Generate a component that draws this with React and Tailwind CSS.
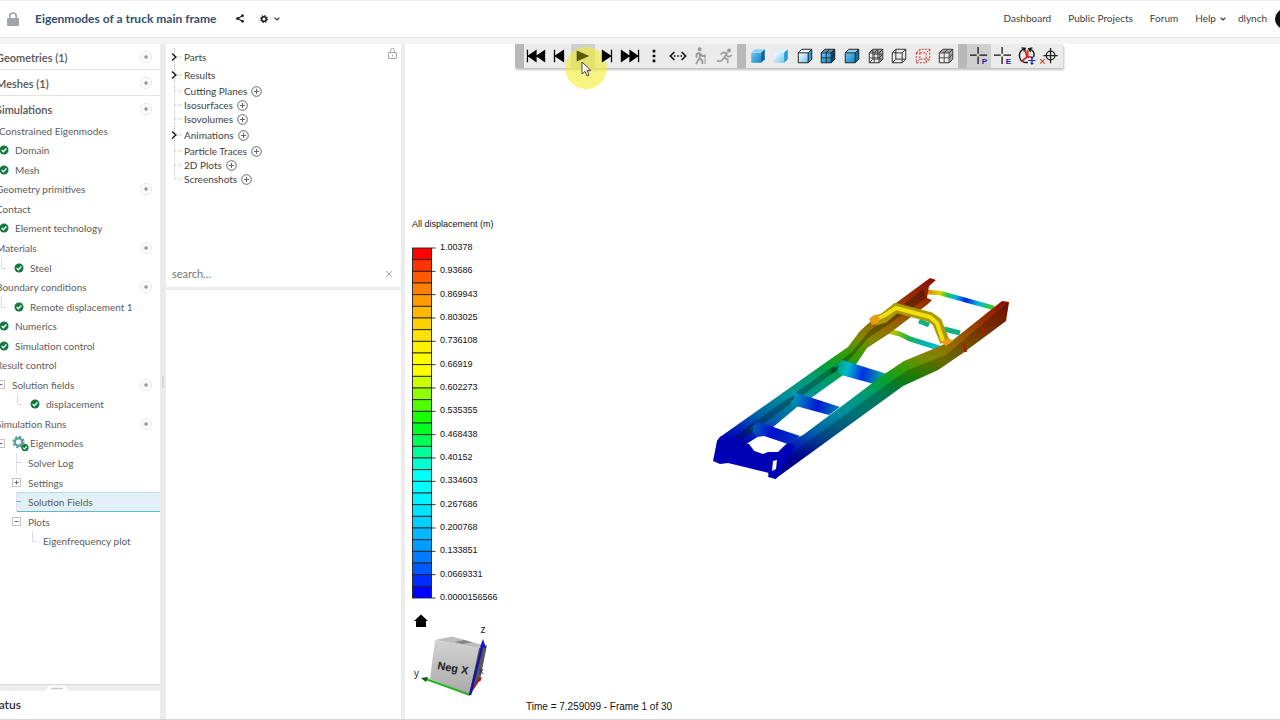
import React from "react";

const PlusDot = ({ label }) => (
  <button aria-label={label} className="flex size-3 shrink-0 items-center justify-center rounded-full border border-[#e6e6e6] bg-white">
    <svg viewBox="0 0 6 6" className="size-1.5" aria-hidden="true">
      <path d="M3 .8v4.4M.8 3h4.4" stroke="#777" strokeWidth="1" />
    </svg>
  </button>
);

const Check = () => (
  <svg viewBox="0 0 10 10" className="size-2.5 shrink-0" aria-hidden="true">
    <circle cx="5" cy="5" r="4.5" fill="#14783f" />
    <path d="M2.7 5.1l1.7 1.7 3-3.2" fill="none" stroke="#fff" strokeWidth="1.4" />
  </svg>
);

const Box = ({ open }) => (
  <svg viewBox="0 0 9 9" className="size-[9px] shrink-0" aria-hidden="true">
    <rect x=".5" y=".5" width="8" height="8" fill="#fff" stroke="#c4c4c4" />
    <path d={open ? "M2.5 4.5h4" : "M2.5 4.5h4M4.5 2.5v4"} stroke="#666" strokeWidth="1" />
  </svg>
);

const Elbow = () => (
  <svg viewBox="0 0 5 20" className="mr-0.5 h-5 w-[5px] shrink-0" aria-hidden="true">
    <path d="M.5 0v10.5H5" fill="none" stroke="#dcdcdc" />
  </svg>
);

const Dash = ({ active }) => (
  <svg viewBox="0 0 5 20" className="h-5 w-[5px] shrink-0" aria-hidden="true">
    <path d="M.5 0v20" stroke="#e2e2e2" />
    <path d="M0 9.5h5" stroke={active ? "#63b5d2" : "#cfcfcf"} />
  </svg>
);

const RunGear = () => (
  <svg viewBox="0 0 17 17" className="size-[17px] shrink-0" aria-hidden="true">
    <circle cx="6.5" cy="7" r="3.7" fill="none" stroke="#5f9e9f" strokeWidth="2.4" />
    <circle cx="6.5" cy="7" r="5.4" fill="none" stroke="#5f9e9f" strokeWidth="1.6" strokeDasharray="2.1 2.14" />
    <circle cx="13" cy="12.6" r="3.6" fill="#14783f" />
    <path d="M11.2 12.6l1.3 1.3 2.3-2.4" fill="none" stroke="#fff" strokeWidth="1.1" />
  </svg>
);

const treeRows = [
  { t: "Constrained Eigenmodes", pad: "pl-[15px]" },
  { t: "Domain", pad: "pl-[15px] gap-1.5", icon: <Check /> },
  { t: "Mesh", pad: "pl-[15px] gap-1.5", icon: <Check /> },
  { t: "Geometry primitives", pad: "pl-[12px]", add: true },
  { t: "Contact", pad: "pl-[12px]" },
  { t: "Element technology", pad: "pl-[15px] gap-1.5", icon: <Check /> },
  { t: "Materials", pad: "pl-[12px]", add: true },
  { t: "Steel", pad: "pl-[17px] gap-1.5", icon: <><Elbow /><Check /></> },
  { t: "Boundary conditions", pad: "pl-[12px]", add: true },
  { t: "Remote displacement 1", pad: "pl-[17px] gap-1.5", icon: <><Elbow /><Check /></> },
  { t: "Numerics", pad: "pl-[15px] gap-1.5", icon: <Check /> },
  { t: "Simulation control", pad: "pl-[15px] gap-1.5", icon: <Check /> },
  { t: "Result control", pad: "pl-[12px]" },
  { t: "Solution fields", pad: "pl-[12px] gap-[7px]", icon: <Box open />, add: true },
  { t: "displacement", pad: "pl-[33px] gap-1.5", icon: <><Elbow /><Check /></> },
  { t: "Simulation Runs", pad: "pl-[12px]", add: true },
  { t: "Eigenmodes", pad: "pl-[12px]", icon: <><Box open /><span className="w-[7px]" /><RunGear /><span className="w-px" /></> },
  { t: "Solver Log", pad: "pl-[32px] gap-[7px]", icon: <Dash /> },
  { t: "Settings", pad: "pl-[28px] gap-[7px]", icon: <Box /> },
  { t: "Solution Fields", pad: "gap-[7px]", icon: <Dash active />, active: true },
  { t: "Plots", pad: "pl-[28px] gap-[7px]", icon: <Box open /> },
  { t: "Eigenfrequency plot", pad: "pl-[48px] gap-1", icon: <Elbow /> },
];

const Section = ({ children, last }) => (
  <div className={"flex items-center pr-2 " + (last ? "h-[25px]" : "h-[26px] border-b border-[#e4e4e4]")}>
    <h2 className="flex-1 pt-0.5 pl-[12px] text-[11px] leading-none font-semibold text-[#555]">{children}</h2>
    <PlusDot label={"Add to " + children} />
  </div>
);

const Sidebar = () => (
  <aside className="flex w-40 shrink-0 flex-col overflow-hidden">
    <nav aria-label="Project tree" className="-ml-4 flex-1 bg-white">
      <Section>Geometries (1)</Section>
      <Section>Meshes (1)</Section>
      <Section last>Simulations</Section>
      <ul className="grid h-[430px] auto-rows-fr text-[10px] leading-none text-[#5c5c5c]">
        {treeRows.map((r) => (
          <li
            key={r.t}
            className={
              "flex min-h-0 items-center pr-2 whitespace-nowrap " +
              (r.active ? "ml-8 border-y border-t-[#b9dce8] border-b-[#63b5d2] bg-[#e1eff6] " : "") +
              r.pad
            }
          >
            {r.icon}
            <a href="#" className="flex-1">{r.t}</a>
            {r.add && <PlusDot label={"Add " + r.t} />}
          </li>
        ))}
      </ul>
    </nav>
    <div className="flex h-[7px] justify-center border-t border-[#dcdcdc] bg-[#ececec] pr-[46px]">
      <svg viewBox="0 0 24 6" className="h-1.5 w-6" aria-hidden="true">
        <path d="M0 6L4 1h16l4 5z" fill="#fff" />
        <path d="M6 3.5h12" stroke="#c9c9c9" strokeWidth="1.6" />
      </svg>
    </div>
    <footer className="-ml-4 h-7 bg-white pl-1 text-[12px] leading-7 font-semibold text-[#333]">Status</footer>
  </aside>
);

const results = [
  ["Parts", true, false],
  ["Results", true, false],
  ["Cutting Planes", false, true],
  ["Isosurfaces", false, true],
  ["Isovolumes", false, true],
  ["Animations", true, true],
  ["Particle Traces", false, true],
  ["2D Plots", false, true],
  ["Screenshots", false, true],
];

const ResultPanel = () => (
  <section className="flex w-[235px] shrink-0 flex-col">
    <div className="flex h-[243px] flex-col bg-white">
      <div className="flex flex-1 items-start justify-between pt-1 pr-1 pl-[5px]">
        <ul className="text-[10px] text-[#3f3f3f]">
          {results.map(([t, exp, add], i) => (
            <li key={t} className={"flex items-center " + (exp ? "h-[18px]" : "h-3.5")}>
              <svg viewBox="0 0 12 18" className="h-full w-3" preserveAspectRatio="none" aria-hidden="true">
                <path d={i === 8 ? "M3.5 0v9" : "M3.5 0v18"} stroke="#bbb" strokeDasharray="1 1" />
                <path d="M4 9h8" stroke="#bbb" strokeDasharray="1 1" />
                {exp && <path d="M1 5.500L4.800 9 1 12.500" fill="none" stroke="#222" strokeWidth="1.600" />}
              </svg>
              <span className="pl-px leading-none">{t}</span>
              {add && (
                <button aria-label={"Add " + t} className="ml-1">
                  <svg viewBox="0 0 11 11" className="size-[11px]" fill="none" stroke="#666" aria-hidden="true">
                    <circle cx="5.5" cy="5.5" r="4.8" />
                    <path d="M5.500 2.900v5.200M2.900 5.500h5.200" />
                  </svg>
                </button>
              )}
            </li>
          ))}
        </ul>
        <svg viewBox="0 0 9 11" className="h-[11px] w-[9px]" fill="none" stroke="#a5a5a5" aria-hidden="true">
          <rect x=".5" y="4.500" width="8" height="6" rx=".5" />
          <path d="M2.500 4.500v-2a2 2 0 014 0v2M4.500 6.500v2" />
        </svg>
      </div>
      <div className="flex h-[26px] items-center px-1.5">
        <input aria-label="Search" placeholder="search..." className="min-w-0 flex-1 bg-transparent text-[11px] outline-none placeholder:text-[#777]" />
        <button aria-label="Clear search" className="mr-0.5">
          <svg viewBox="0 0 8 8" className="size-2" aria-hidden="true">
            <path d="M1 1l6 6M7 1L1 7" stroke="#aaa" />
          </svg>
        </button>
      </div>
    </div>
    <div className="mt-[3px] flex-1 bg-white" />
  </section>
);

/* toolbar glyphs, drawn on a 20px grid */
const Cube = ({ front, top, side, edge, grid, dashed }) => (
  <>
    {front && (
      <>
        <path d="M2.5 6.5h11v11h-11z" fill={front} />
        <path d="M2.5 6.5l4-4h11l-4 4z" fill={top} />
        <path d="M13.5 6.5l4-4v11l-4 4z" fill={side} />
      </>
    )}
    {edge && (
      <path
        d={"M2.5 6.5h11v11h-11zl4-4h11l-4 4M17.5 2.5v11l-4 4" + (grid === "wire" ? "M6.5 2.5v11h11M6.5 13.5l-4 4" : "")}
        fill="none" stroke={edge} strokeWidth="1.1" strokeDasharray={dashed ? "2.4 1.4" : undefined}
      />
    )}
    {(grid === "lines" || grid === "mesh") && (
      <path
        d={"M8 6.5v11M2.5 12h11M8 6.5l4-4M13.5 12l4-4M4.5 4.5h11v11" + (grid === "mesh" ? "M6.500 2.500v11h11M6.500 13.500l-4 4M12 2.500v11M6.500 8h11" : "")}
        fill="none" stroke={edge} strokeWidth=".9"
      />
    )}
  </>
);

const ink = "#333";
const player = [
  ["First frame", <path d="M.5 3v14M10 4v12L1.500 10zM19.500 4v12L11 10z" fill="#000" stroke="#000" strokeWidth="1.4" />],
  ["Previous frame", <path d="M5 3v14M15 4v12l-9-6z" fill="#000" stroke="#000" strokeWidth="1.4" />],
  ["Play", <path d="M3 4v12l14-6z" fill="#5c5a00" />],
  ["Next frame", <path d="M15 3v14M5 4v12l9-6z" fill="#000" stroke="#000" strokeWidth="1.4" />],
  ["Last frame", <path d="M19.500 3v14M.5 4v12L9 10zM10 4v12l8.500-6z" fill="#000" stroke="#000" strokeWidth="1.400" />],
  ["More", <path d="M8.500 3h3v3h-3zM8.500 8.500h3v3h-3zM8.500 14h3v3h-3z" fill="#111" />],
  ["Fit range", <path d="M6 5.500L1.500 10 6 14.500M14 5.500l4.500 4.500-4.500 4.500M5.500 10h1.800M9.100 10h1.800M12.700 10h1.800" fill="none" stroke="#111" strokeWidth="1.8" />],
  ["Walk", <g fill="none" stroke="#999" strokeWidth="2"><circle cx="8.500" cy="2.500" r="1.200" fill="#999" /><path d="M8 6l-3 2v4M8.500 6v6l-4 7M8.500 12l3 3v4M8.500 7l3 3h3" /><path d="M14.500 8v11" strokeWidth="1.200" /></g>],
  ["Run", <g fill="none" stroke="#999" strokeWidth="1.800"><circle cx="14.500" cy="4" r="1.300" fill="#999" /><path d="M13 7l-5-1-3 2.500M12 7l-3 5 4 2v4M9 12l-3 3.500H1M11.500 9.500l3 1.500 3-2" /></g>],
];
const b1 = "url(#blueFace)";
const shading = [
  ["Smooth shading", <Cube front={b1} top="#8fd0f2" side="#0d5f94" />],
  ["Flat shading", <Cube front="url(#paleFace)" top="#d8f1fd" side="#1b9be0" />],
  ["Shaded with edges", <Cube front="url(#paleFace)" top="#e9f7fd" side="#2b9ad0" edge="#222" />],
  ["Shaded with mesh", <Cube front={b1} top="#8fd0f2" side="#0d5f94" edge="#10202c" grid="lines" />],
  ["Outline", <Cube front={b1} top="#8fd0f2" side="#0d6fae" edge="#222" />],
  ["Full mesh", <Cube edge={ink} grid="mesh" />],
  ["Wireframe", <Cube edge={ink} grid="wire" />],
  ["Points", <Cube edge="#d23a34" grid="wire" dashed />],
  ["Hidden line", <Cube edge={ink} grid="lines" />],
];
const probe = [
  ["Probe point", <><path d="M0 9h7.500M10.500 9H19M9 0v7.500M9 10.500V19" stroke="#111" strokeWidth="1.400" /><text x="13" y="19" fontSize="9" fontWeight="bold" fill="#1a1ab8" fontFamily="Liberation Sans">P</text></>],
  ["Probe element", <><path d="M0 9h7.500M10.500 9H19M9 0v7.500M9 10.500V19" stroke="#111" strokeWidth="1.400" /><text x="13" y="19" fontSize="9" fontWeight="bold" fill="#1a1ab8" fontFamily="Liberation Sans">E</text></>],
  ["Rotate view", <g fill="none"><path d="M8 1.500C3 3 .5 7 2 12M4 1l4 .5-1.500 3.500M12 2c5 1 7 5 5.500 9M16 1l-4 1 2 3.500M2 12c1 4 5 6 9 5" stroke="#111" strokeWidth="1.500" /><path d="M8 3l2 8-6 5M10 11h4" stroke="#d2231c" strokeWidth="2" /><path d="M11 3v7" stroke="#d2231c" strokeWidth="1.500" /><path d="M15.500 11v8M11.500 15h8M14.100 12.400l1.400-1.400 1.400 1.400M14.100 17.600l1.400 1.400 1.400-1.400" stroke="#1d22b5" strokeWidth="1.300" /></g>],
  ["Center of rotation", <g fill="none" stroke="#222" strokeWidth="1.400"><circle cx="9.500" cy="9.500" r="4.800" /><path d="M9.500 1v17M1.500 9.500h16" /><path d="M-2 13.500l5 5M3 13.500l-5 5" stroke="#d8402c" strokeWidth="1.200" /></g>],
];

const ToolGroup = ({ label, items, cols, active }) => (
  <div role="group" aria-label={label} className="flex">
    <span className="w-[9px] bg-[#b8b8b8]" />
    <div className={"grid bg-[#ebebeb] " + cols}>
      {items.map(([name, art]) => (
        <button
          key={name}
          aria-label={name}
          className={"relative flex items-center justify-center " + (name === active ? "bg-[#cfcfcf]" : "")}
        >
          {name === "Play" && <span className="absolute top-[3px] -left-1.5 z-10 size-[42px] rounded-full bg-[#f3ec2f]/60" />}
          <svg viewBox="0 0 20 20" className="relative z-20 size-[18px] overflow-visible" aria-hidden="true">{art}</svg>
          {name === "Play" && (
            <svg viewBox="0 0 12 18" className="absolute top-[17px] left-2.5 z-30 h-[18px] w-3" aria-hidden="true">
              <path d="M1 1v12l3-2.600 2 4.600 2-.9-2-4.500h4z" fill="#fff" stroke="#444" strokeWidth="1" />
            </svg>
          )}
        </button>
      ))}
    </div>
  </div>
);

const legend = [
  "1.00378", "0.93686", "0.869943", "0.803025", "0.736108", "0.66919", "0.602273", "0.535355",
  "0.468438", "0.40152", "0.334603", "0.267686", "0.200768", "0.133851", "0.0669331", "0.0000156566",
];
const ramp = [
  "#ff0000", "#ff3300", "#ff5a00", "#ff8000", "#ff9d00", "#ffb800", "#ffd000", "#ffe000", "#fff000", "#ffff00",
  "#ffff00", "#ccff00", "#90ff00", "#50ff00", "#18ff00", "#00ff20", "#00ff58", "#00ff98", "#00ffd0", "#00fff8",
  "#00ffff", "#00f4ff", "#00e4ff", "#00d0ff", "#00b8ff", "#009cff", "#007cff", "#0058ff", "#002cff", "#0000ff",
];

const Legend = () => (
  <div className="font-['Liberation_Sans',Arial,sans-serif] text-[9px] text-[#111]">
    <h3 className="h-3 leading-3">All displacement (m)</h3>
    <div className="mt-1.5 flex">
      <svg viewBox="0 0 24 350" className="mt-3 h-[350px] w-6 overflow-visible" aria-hidden="true">
        {ramp.map((c, i) => (
          <rect key={i} x=".5" y={(i * 350) / 30} width="19" height={350 / 30} fill={c} stroke="#222" strokeWidth=".9" />
        ))}
        {legend.map((l, i) => (
          <path key={l} d={`M20 ${(i * 350) / 15}h3.500`} stroke="#333" />
        ))}
      </svg>
      <ol className="ml-1 grid h-[373px] auto-rows-fr">
        {legend.map((l) => (
          <li key={l} className="flex items-center leading-none">{l}</li>
        ))}
      </ol>
    </div>
  </div>
);

const ViewCube = () => (
  <svg viewBox="412 610 84 90" className="h-[90px] w-[84px]" role="img" aria-label="View cube">
    <defs>
      <linearGradient id="cubeFace" x1="0" y1="0" x2="0" y2="1">
        <stop offset="0" stopColor="#d2d2d2" />
        <stop offset="1" stopColor="#a9a9a9" />
      </linearGradient>
    </defs>
    <path d="M421 614.500l7 6.500h-2v6h-10v-6h-2z" fill="#000" />
    <path d="M435 640l17-3.500 35 9.500-9 2z" fill="#bdbdbd" />
    <path d="M455 642l9-2 8 2.500-10 1.500z" fill="#858585" />
    <path d="M435 640l44 8-10 47-39-16z" fill="url(#cubeFace)" />
    <path d="M479 648l8-3-7 35-11 15z" fill="#585858" />
    <path d="M470 694l9-15" stroke="#a01818" strokeWidth="1.500" />
    <path d="M477 679l5-2-2 5z" fill="#b01010" />
    <path d="M470 695l-44-16" stroke="#22b322" strokeWidth="2" />
    <path d="M421 678l7-1-2 5z" fill="#0a5a0a" />
    <path d="M470 695l12-48" stroke="#1414a8" strokeWidth="2.500" />
    <path d="M483 639l3 9-6-1z" fill="#1414c8" />
    <g fontFamily="Liberation Sans, Arial, sans-serif" fill="#222">
      <text x="437" y="669" fontSize="11" fontWeight="bold" transform="rotate(10 437 669)">Neg X</text>
      <text x="480.500" y="633" fontSize="10">z</text>
      <text x="414" y="677" fontSize="10">y</text>
      <text x="479" y="674" fontSize="9">x</text>
    </g>
  </svg>
);

const FrameModel = () => (
  <svg viewBox="405 44 875 676" className="absolute top-0 left-0 h-[676px] w-[875px]" role="img" aria-label="Truck frame displacement">
    <defs>
      <linearGradient id="rail" gradientUnits="userSpaceOnUse" x1="780" y1="455" x2="838" y2="253">
        <stop offset="0" stopColor="#0000b4" />
        <stop offset=".06" stopColor="#0020b8" />
        <stop offset=".15" stopColor="#0060a8" />
        <stop offset=".28" stopColor="#00909a" />
        <stop offset=".4" stopColor="#009c70" />
        <stop offset=".48" stopColor="#08a030" />
        <stop offset=".56" stopColor="#3a9c00" />
        <stop offset=".64" stopColor="#808800" />
        <stop offset=".76" stopColor="#966000" />
        <stop offset=".86" stopColor="#983800" />
        <stop offset="1" stopColor="#8c1000" />
      </linearGradient>
      <linearGradient id="memA" gradientUnits="userSpaceOnUse" x1="752" y1="428" x2="795" y2="440">
        <stop offset="0" stopColor="#0060b8" /><stop offset=".45" stopColor="#0010d0" /><stop offset="1" stopColor="#0030c0" />
      </linearGradient>
      <linearGradient id="memB" gradientUnits="userSpaceOnUse" x1="792" y1="398" x2="838" y2="412">
        <stop offset="0" stopColor="#00a0b8" /><stop offset=".55" stopColor="#0018d8" /><stop offset="1" stopColor="#0080b0" />
      </linearGradient>
      <linearGradient id="memC" gradientUnits="userSpaceOnUse" x1="836" y1="366" x2="882" y2="380">
        <stop offset="0" stopColor="#00a060" /><stop offset=".25" stopColor="#00b8d0" /><stop offset=".58" stopColor="#0030e0" /><stop offset="1" stopColor="#00a8a0" />
      </linearGradient>
      <linearGradient id="tube" gradientUnits="userSpaceOnUse" x1="926" y1="291" x2="992" y2="307">
        <stop offset="0" stopColor="#e07000" /><stop offset=".2" stopColor="#d8d800" /><stop offset=".32" stopColor="#20c840" />
        <stop offset=".45" stopColor="#00b0e8" /><stop offset=".6" stopColor="#0020e0" /><stop offset=".8" stopColor="#00b8e0" /><stop offset="1" stopColor="#40d020" />
      </linearGradient>
      <linearGradient id="midTube" gradientUnits="userSpaceOnUse" x1="890" y1="330" x2="937" y2="347">
        <stop offset="0" stopColor="#d8c800" /><stop offset=".4" stopColor="#20b040" /><stop offset=".7" stopColor="#00b0b0" /><stop offset="1" stopColor="#00c0c8" />
      </linearGradient>
    </defs>
    {/* rear cross tubes */}
    <path d="M919 321l10 4M944 329l16 4" stroke="#10b080" strokeWidth="5" />
    <path d="M926 292l14 1 54 15" fill="none" stroke="url(#tube)" strokeWidth="4.500" />
    <path d="M888 331l12 3 10 5 32 10" fill="none" stroke="url(#midTube)" strokeWidth="5" />
    {/* far rail: full section, inner web, top flange */}
    <path d="M717 441L720 437 832 358 848 347 860 331 870 322 930 278 936 280 929 286 927 298 932 300 928 304 890 333 867 348 855 366 846 373 811 398 797 407 772 428 743 446 748 452z" fill="url(#rail)" />
    <path d="M735 436L832 367 852 352 869 331 923 289 926 298 889 324 868 338 851 358 840 368 745 437 741 441z" fill="#000" opacity=".28" />
    <path d="M731 436l10 6 8 2 6 8-14-2-12-10z" fill="#0000a8" />
    {/* cross members */}
    <path d="M750 428l8-6 42 14-12 8-12-4-12-4-7 1z" fill="url(#memA)" />
    <path d="M786 399l8-7 46 15-11 8-33-9z" fill="url(#memB)" />
    <path d="M833 366l9-6 45 14-13 10-33-9z" fill="url(#memC)" />
    <path d="M746 430l7-4v5l-5 4zM787 399l7-4v4l-5 4zM831 369l8-4-2 6-6 3z" fill="#003434" opacity=".6" />
    {/* near rail */}
    <path d="M778 452L788 442 803 435 842 406 883 375 904 361 938 347 953 340 1002 301 1009 302 1006 321 963 353 938 370 903 386 775 479 768 474z" fill="url(#rail)" />
    <path d="M782 460L842 417 890 382 908 370 946 355 968 336 1009 302 1006 321 963 353 938 370 903 386 775 479z" fill="#000" opacity=".22" />
    <path d="M963 343l3 9M982 328l3 8" stroke="#a81c00" strokeWidth="2.500" />
    {/* arch */}
    <path d="M874 321l10-3 12-10 34 9 7 5 8 20" fill="none" stroke="#a89a00" strokeWidth="10" strokeLinejoin="round" />
    <path d="M875 320l10-5 11-7 34 9 7 6 6 18" fill="none" stroke="#f4de10" strokeWidth="4" strokeLinejoin="round" />
    <path d="M869 319l5-4 6 3-2 5-6 2zM941 342l8-4 4 3-7 5z" fill="#e89c18" />
    {/* front cross member */}
    <path d="M717 441L721 436 730 437 740 446 763 454 768 452 780 452 790 443 795 447 776 479 768 477 769 473 728 463 720 464 713 461z" fill="#0000b4" />
    <path d="M773 461l4-1-1 9-4 2z" fill="#fff" />
  </svg>
);

const Viewer = () => (
  <main className="relative flex min-w-0 flex-1 flex-col bg-white">
    <FrameModel />
    <svg width="0" height="0" className="absolute" aria-hidden="true">
      <defs>
        <linearGradient id="blueFace" x1="0" y1="0" x2="1" y2="1">
          <stop offset="0" stopColor="#6cc6f2" /><stop offset="1" stopColor="#1583c4" />
        </linearGradient>
        <linearGradient id="paleFace" x1="0" y1="0" x2="1" y2="1">
          <stop offset="0" stopColor="#ffffff" /><stop offset="1" stopColor="#6cc4ee" />
        </linearGradient>
      </defs>
    </svg>
    <div role="toolbar" aria-label="Viewer tools" className="relative ml-[110px] flex h-6 self-start shadow-[1px_2px_2px_rgba(0,0,0,0.25)]">
      <ToolGroup label="Animation" items={player} cols="w-[213px] grid-cols-9" active="Play" />
      <ToolGroup label="Shading" items={shading} cols="w-[212px] grid-cols-9" />
      <ToolGroup label="Probe" items={probe} cols="w-24 grid-cols-4" active="Probe point" />
    </div>
    <div className="relative mt-auto pl-[7px]">
      <Legend />
      <div className="mt-px flex items-end gap-[30px] pb-[19px]">
        <ViewCube />
        <p className="-mb-3.5 font-['Liberation_Sans',Arial,sans-serif] text-[10px] text-[#111]">Time = 7.259099 - Frame 1 of 30</p>
      </div>
    </div>
  </main>
);

const Header = () => (
  <header className="flex h-[38px] shrink-0 items-center border-t border-b border-t-[#eee] border-b-[#e6e6e6] bg-white pb-px text-[10px] text-[#3d3d3d]">
    <svg viewBox="0 0 12 14" className="ml-[7px] h-3.5 w-3" aria-hidden="true">
      <rect y="6" width="12" height="8" rx="1" fill="#a0a4a8" />
      <path d="M2.800 6.500V4.200a3.200 3.200 0 016.400 0v2.300" fill="none" stroke="#a0a4a8" strokeWidth="1.700" />
    </svg>
    <h1 className="ml-4 text-[12px] font-bold text-[#33506f]">Eigenmodes of a truck main frame</h1>
    <button aria-label="Share" className="ml-5">
      <svg viewBox="0 0 8 9" className="h-[9px] w-2" aria-hidden="true">
        <path d="M6.500 1.700L1.700 4.500l4.800 2.800" fill="none" stroke="#222" strokeWidth="1.100" />
        <circle cx="6.500" cy="1.700" r="1.400" fill="#222" /><circle cx="1.600" cy="4.500" r="1.500" fill="#222" /><circle cx="6.500" cy="7.300" r="1.400" fill="#222" />
      </svg>
    </button>
    <button aria-label="Settings" className="ml-4 flex items-center gap-1.5">
      <svg viewBox="0 0 8 8" className="size-2" aria-hidden="true">
        <circle cx="4" cy="4" r="2.300" fill="none" stroke="#222" strokeWidth="1.600" />
        <circle cx="4" cy="4" r="3.400" fill="none" stroke="#222" strokeWidth="1.200" strokeDasharray="1.330 1.330" />
      </svg>
      <svg viewBox="0 0 6 4" className="h-1 w-1.5" aria-hidden="true"><path d="M.6.6L3 3 5.400.6" fill="none" stroke="#333" strokeWidth="1.200" /></svg>
    </button>
    <nav aria-label="Main" className="ml-auto flex items-center">
      <a href="#" className="mr-[17px]">Dashboard</a>
      <a href="#" className="mr-[17px]">Public Projects</a>
      <a href="#" className="mr-[17px]">Forum</a>
      <a href="#" className="mr-3 flex items-center gap-1">
        Help
        <svg viewBox="0 0 6 4" className="h-1 w-1.5" aria-hidden="true"><path d="M.6.6L3 3 5.400.6" fill="none" stroke="#333" strokeWidth="1.200" /></svg>
      </a>
      <a href="#" className="mr-2">dlynch</a>
      <span className="h-5 w-[5px] overflow-hidden"><span className="block size-5 rounded-full bg-[#111]" /></span>
    </nav>
  </header>
);

export default function App() {
  return (
    <div className="flex min-h-screen flex-col bg-[#f1f1f1] font-[Lato,sans-serif]">
      <Header />
      <div className="flex flex-1 border-b border-[#d5d5d5] bg-[#ececec]">
        <div className="flex flex-1 border-t-[6px] border-[#f3f3f3]">
          <Sidebar />
          <div className="flex w-1.5 items-center justify-center">
            <span className="h-3 w-0.5 bg-[#d6d6d6]" />
          </div>
          <ResultPanel />
          <div className="w-1" />
          <Viewer />
        </div>
      </div>
    </div>
  );
}
